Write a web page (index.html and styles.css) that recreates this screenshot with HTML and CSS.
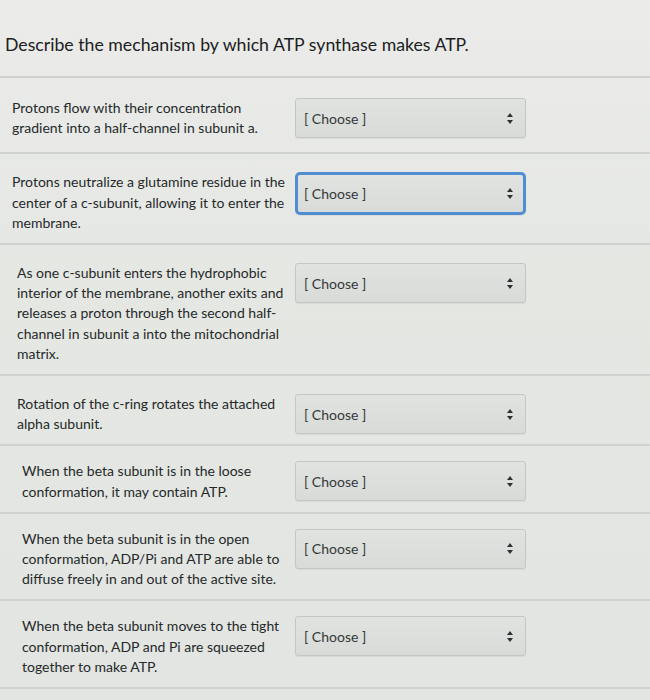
FILE: index.html
```html
<!DOCTYPE html>
<html lang="en">
<head>
    <meta charset="UTF-8">
    <meta name="viewport" content="width=device-width, initial-scale=1.0">
    <title>Quiz - ATP synthase</title>
    <link rel="stylesheet" href="styles.css">
</head>
<body>
    <div class="question">
        <h2 class="question-text">Describe the mechanism by which ATP synthase makes ATP.</h2>

        <div class="answers">
            <div class="match-row">
                <p class="prompt">Protons flow with their concentration gradient into a half-channel in subunit a.</p>
                <div class="select"><span>[ Choose ]</span><span class="arrows"></span></div>
            </div>
            <div class="match-row">
                <p class="prompt">Protons neutralize a glutamine residue in the center of a c-subunit, allowing it to enter the membrane.</p>
                <div class="select focused"><span>[ Choose ]</span><span class="arrows"></span></div>
            </div>
            <div class="match-row">
                <p class="prompt">As one c-subunit enters the hydrophobic interior of the membrane, another exits and releases a proton through the second half-channel in subunit a into the mitochondrial matrix.</p>
                <div class="select"><span>[ Choose ]</span><span class="arrows"></span></div>
            </div>
            <div class="match-row">
                <p class="prompt">Rotation of the c-ring rotates the attached alpha subunit.</p>
                <div class="select"><span>[ Choose ]</span><span class="arrows"></span></div>
            </div>
            <div class="match-row">
                <p class="prompt">When the beta subunit is in the loose conformation, it may contain ATP.</p>
                <div class="select"><span>[ Choose ]</span><span class="arrows"></span></div>
            </div>
            <div class="match-row">
                <p class="prompt">When the beta subunit is in the open conformation, ADP/Pi and ATP are able to diffuse freely in and out of the active site.</p>
                <div class="select"><span>[ Choose ]</span><span class="arrows"></span></div>
            </div>
            <div class="match-row">
                <p class="prompt">When the beta subunit moves to the tight conformation, ADP and Pi are squeezed together to make ATP.</p>
                <div class="select"><span>[ Choose ]</span><span class="arrows"></span></div>
            </div>
        </div>
    </div>
</body>
</html>
```

FILE: styles.css
```css
* {
    margin: 0;
    padding: 0;
    box-sizing: border-box;
}

body {
    font-family: Lato, "Open Sans", sans-serif;
    background: linear-gradient(180deg, #ebecea 0%, #e5e7e3 40%, #e2e5e1 100%);
    color: #25292a;
    min-height: 100vh;
}

.question-text {
    font-size: 17.7px;
    font-weight: 400;
    color: #1c2021;
    padding: 34px 0 0 5px;
    height: 78px;
    border-bottom: 2px solid #cfd2ce;
}

.match-row {
    display: flex;
    align-items: flex-start;
    padding: 18px 124px 10px 17px;
    border-bottom: 2px solid #cfd2ce;
}

.match-row:nth-child(-n+2) {
    padding-left: 12px;
}

.match-row:first-child {
    padding-top: 20px;
    padding-bottom: 14px;
}

.match-row:nth-child(n+5) {
    padding-top: 15px;
    padding-left: 22px;
}

.prompt {
    flex: 1;
    font-size: 14px;
    line-height: 20.2px;
}

.select {
    width: 231px;
    height: 40px;
    flex-shrink: 0;
    display: flex;
    align-items: center;
    justify-content: space-between;
    padding: 0 12px 0 8px;
    background: linear-gradient(180deg, #e0e3e0 0%, #d8dbd8 100%);
    border: 1px solid #c4c8c4;
    border-radius: 3px;
    box-shadow: 0 1px 1px rgba(0, 0, 0, 0.06);
    font-size: 14px;
    color: #34383a;
}

.select.focused {
    border: 3px solid #4f8ed3;
    border-radius: 5px;
    height: 43px;
    padding-left: 6px;
    padding-right: 10px;
}

/* up/down chevrons like a native select */
.arrows {
    width: 6px;
    height: 11px;
    position: relative;
}

.arrows::before,
.arrows::after {
    content: "";
    position: absolute;
    left: 0;
    border-left: 3px solid transparent;
    border-right: 3px solid transparent;
}

.arrows::before {
    top: 0;
    border-bottom: 4px solid #2c3032;
}

.arrows::after {
    bottom: 0;
    border-top: 4px solid #2c3032;
}
```
